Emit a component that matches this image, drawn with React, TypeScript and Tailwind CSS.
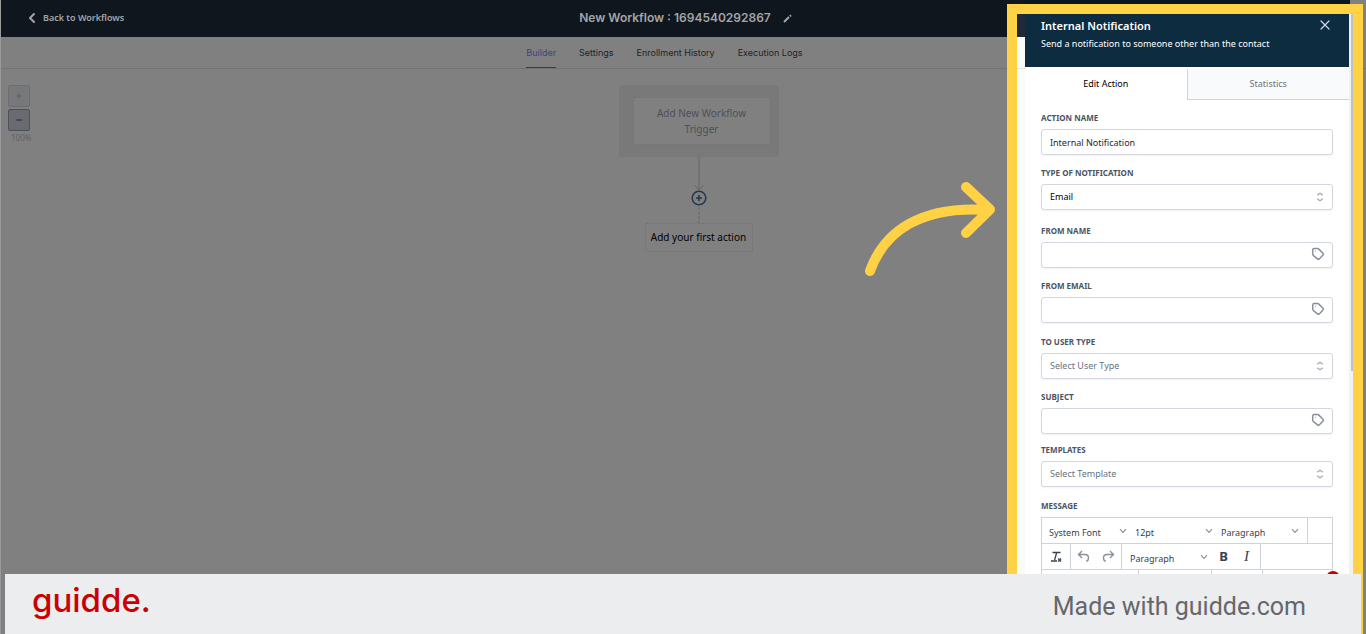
import React, { useState } from 'react';
import { ChevronLeft, Minus, Plus, X } from 'lucide-react';
import { clsx } from 'clsx';

const PAGE_TABS = ['Builder', 'Settings', 'Enrollment History', 'Execution Logs'];
const PANEL_TABS = ['Edit Action', 'Statistics'];

type Field = {
  id: string;
  label: string;
  kind: 'text' | 'tag' | 'select';
  value?: string;
  placeholder?: string;
  gap: string;
};

const FIELDS: Field[] = [
  { id: 'action-name', label: 'Action Name', kind: 'text', value: 'Internal Notification', gap: 'mb-3' },
  { id: 'type', label: 'Type of Notification', kind: 'select', value: 'Email', gap: 'mb-[15px]' },
  { id: 'from-name', label: 'From Name', kind: 'tag', gap: 'mb-3' },
  { id: 'from-email', label: 'From Email', kind: 'tag', gap: 'mb-[13px]' },
  { id: 'user-type', label: 'To User Type', kind: 'select', placeholder: 'Select User Type', gap: 'mb-3' },
  { id: 'subject', label: 'Subject', kind: 'tag', gap: 'mb-[10px]' },
  { id: 'templates', label: 'Templates', kind: 'select', placeholder: 'Select Template', gap: 'mb-[13px]' },
];

const labelClass = 'block h-3 text-[8px] leading-3 font-bold uppercase text-[#4b5563]';
const controlClass =
  'block h-[26px] w-full appearance-none rounded-[3px] border border-[#d3d6df] bg-white px-2 text-[9px] shadow-xs outline-none';

type IconProps = { className?: string };

function TagIcon({ className }: IconProps) {
  return (
    <svg viewBox="0 0 14 14" className={className} fill="none" stroke="currentColor" strokeWidth="1.5" strokeLinejoin="round">
      <path d="M3.300 1.600H6.600c.5 0 .9.2 1.200.5l4.200 4.100c.5.5.5 1.200 0 1.700l-3.800 4c-.5.5-1.200.5-1.700 0L2.200 8.300c-.3-.3-.500-.7-.500-1.200V3.200c0-.9.700-1.600 1.600-1.600Z" />
      <path d="M4.300 4.200h.2" strokeWidth="1" strokeLinecap="round" />
    </svg>
  );
}

function SelectorIcon({ className }: IconProps) {
  return (
    <svg viewBox="0 0 8 10" className={className} fill="none" stroke="currentColor" strokeWidth="1.200">
      <path d="M1.200 3.300 4 1.200l2.800 2.100M1.200 6.700 4 8.800l2.800-2.100" />
    </svg>
  );
}

function CaretIcon({ className }: IconProps) {
  return (
    <svg viewBox="0 0 8 6" className={className} fill="none" stroke="currentColor" strokeWidth="1.200">
      <path d="M1 1.200 4 4.300l3-3.100" />
    </svg>
  );
}

function UndoIcon({ className }: IconProps) {
  return (
    <svg viewBox="0 0 13 13" className={className} fill="none" stroke="currentColor" strokeWidth="1.400">
      <path d="M5 1 1.500 4.500 5 8M1.500 4.500H8c2.200 0 3.500 1.500 3.500 3.400S10.400 11 9.200 11.400" />
    </svg>
  );
}

function FormField({ field }: { field: Field }) {
  return (
    <div className={field.gap}>
      <label htmlFor={field.id} className={clsx(labelClass, 'mb-[5px]')}>
        {field.label}
      </label>
      <div className="relative">
        {field.kind === 'select' ? (
          <>
            <select
              id={field.id}
              className={clsx(controlClass, field.placeholder ? 'text-[#6b7280]' : 'text-black')}
            >
              <option>{field.value ?? field.placeholder}</option>
            </select>
            <SelectorIcon className="pointer-events-none absolute top-2 right-[9px] h-[10px] w-2 text-[#a3a8b2]" />
          </>
        ) : (
          <input
            id={field.id}
            type="text"
            defaultValue={field.value}
            className={clsx(controlClass, 'text-[#1f2937]')}
          />
        )}
        {field.kind === 'tag' && (
          <button type="button" aria-label="Insert custom value" className="absolute top-[5px] right-2 text-[#8b8f9b]">
            <TagIcon className="h-[14px] w-[14px]" />
          </button>
        )}
      </div>
    </div>
  );
}

function ToolbarSelect({ label, value }: { label: string; value: string }) {
  return (
    <div className="relative h-6 w-[86px]">
      <select aria-label={label} className="h-full w-full appearance-none bg-transparent text-[9px] text-[#374151] outline-none">
        <option>{value}</option>
      </select>
      <CaretIcon className="pointer-events-none absolute top-[10px] right-2 h-[6px] w-2 text-[#8b919d]" />
    </div>
  );
}

function MessageEditor() {
  return (
    <div>
      <p className={clsx(labelClass, 'mb-[5px]')}>Message</p>
      <div className="border border-[#cfd2d8] text-[#374151]">
        <div className="flex h-[26px] border-b border-[#cfd2d8]">
          <div className="flex border-r border-[#cfd2d8] pl-[7px]">
            <ToolbarSelect label="Font" value="System Font" />
            <ToolbarSelect label="Size" value="12pt" />
            <ToolbarSelect label="Block" value="Paragraph" />
          </div>
        </div>
        <div className="flex h-[26px] border-b border-[#cfd2d8]">
          <div className="flex w-[29px] items-center justify-center border-r border-[#cfd2d8]">
            <button type="button" aria-label="Clear formatting">
              <svg viewBox="0 0 12 12" className="h-3 w-3" fill="none" stroke="currentColor" strokeWidth="1.300">
                <path d="M2.500 1.500h8M6.700 1.500 4.600 9M1 10h6M8.200 7.500l2.800 3M11 7.500l-2.800 3" />
              </svg>
            </button>
          </div>
          <div className="flex w-[51px] items-center justify-around border-r border-[#cfd2d8] text-[#8b919d]">
            <button type="button" aria-label="Undo">
              <UndoIcon className="h-[13px] w-[13px]" />
            </button>
            <button type="button" aria-label="Redo">
              <UndoIcon className="h-[13px] w-[13px] -scale-x-100" />
            </button>
          </div>
          <div className="flex w-[139px] border-r border-[#cfd2d8] pl-2">
            <ToolbarSelect label="Style" value="Paragraph" />
            <button type="button" className="w-[15px] text-[13px] font-bold">B</button>
            <button type="button" className="ml-2 w-[15px] font-['Liberation_Serif',serif] text-[15px] italic">I</button>
          </div>
        </div>
        <div className="flex h-[26px]">
          <div className="w-[97px] border-r border-[#cfd2d8]" />
          <div className="w-[73px] border-r border-[#cfd2d8]" />
          <div className="w-[51px] border-r border-[#cfd2d8]" />
        </div>
      </div>
    </div>
  );
}

function ActionPanel() {
  const [tab, setTab] = useState('Edit Action');

  return (
    <div className="min-w-0 flex-1 bg-white">
      <div className="flex h-[53px] items-start justify-between bg-[#0d2c3f] px-4 text-white">
        <div>
          <h2 className="mt-1 text-[11px] leading-4 font-semibold">Internal Notification</h2>
          <p className="mt-1 text-[9px] leading-3">Send a notification to someone other than the contact</p>
        </div>
        <button type="button" aria-label="Close" className="mt-[3px] text-[#cdd8ea]">
          <X className="h-4 w-4" strokeWidth={1.8} />
        </button>
      </div>
      <div className="mt-[2px] flex h-[31px]">
        {PANEL_TABS.map((name) => (
          <button
            key={name}
            type="button"
            onClick={() => setTab(name)}
            className={clsx(
              'flex-1 border-b text-[9px]',
              tab === name ? 'border-transparent text-black' : 'border-l border-[#d0d4dc] bg-[#f9fafc] text-[#6b7280]'
            )}
          >
            {name}
          </button>
        ))}
      </div>
      <form className="px-4 pt-3">
        {FIELDS.map((field) => (
          <FormField key={field.id} field={field} />
        ))}
        <MessageEditor />
      </form>
    </div>
  );
}

function Canvas() {
  return (
    <main className="relative flex-1 pt-4 pl-[30px]">
      <div className="absolute top-4 left-[7px] flex w-[22px] flex-col gap-[2px]">
        <button
          type="button"
          aria-label="Zoom in"
          className="flex h-[22px] items-center justify-center rounded-[2px] border border-[#6b6d71] bg-[#77787a] text-[#5d5f63]"
        >
          <Plus className="h-2 w-2" strokeWidth={3} />
        </button>
        <button
          type="button"
          aria-label="Zoom out"
          className="flex h-[22px] items-center justify-center rounded-[2px] border border-[#4c505b] bg-[#696b71] text-[#3c3f46]"
        >
          <Minus className="h-2 w-2" strokeWidth={5} />
        </button>
        <span className="pl-[3px] text-[8px] leading-[10px] text-[#5f6165]">100%</span>
      </div>

      <div className="flex flex-col items-center">
        <div className="rounded-[3px] bg-[#797979] py-3 pr-2 pl-[14px]">
          <button
            type="button"
            className="h-12 w-[138px] rounded-[2px] border border-dotted border-[#6e6e6e] bg-[#808080] px-5 text-[10px] leading-4 text-[#4d5056]"
          >
            Add New Workflow Trigger
          </button>
        </div>
        <svg viewBox="0 0 18 66" className="h-[66px] w-[18px]" fill="none">
          <path d="M9 0v33M4.500 28 9 33l4.500-5" stroke="#65676b" />
          <circle cx="9" cy="41" r="6.800" stroke="#27364a" strokeWidth="1.500" />
          <path d="M9 38v6M6 41h6" stroke="#27364a" strokeWidth="1.600" />
          <path d="M9 50v16" stroke="#65676b" strokeDasharray="3 1.500" />
        </svg>
        <button
          type="button"
          className="h-[29px] w-[108px] rounded-[2px] border border-dotted border-[#717171] text-[10px] whitespace-nowrap text-black"
        >
          Add your first action
        </button>
      </div>
    </main>
  );
}

export default function App() {
  const [tab, setTab] = useState('Builder');

  return (
    <div className="relative flex h-screen flex-col overflow-hidden border-l border-[#9a9a9a] bg-[#808080] font-['Noto_Sans',sans-serif]">
      <header className="relative mr-4 flex h-[37px] shrink-0 items-center justify-center bg-[#0f161e] pb-px pl-5 text-[#a3a5a8]">
        <a href="#workflows" className="absolute left-[23px] flex items-center gap-[3px] text-[9px] font-semibold">
          <ChevronLeft className="h-[18px] w-4" strokeWidth={3} />
          Back to Workflows
        </a>
        <h1 className="font-['Inter',sans-serif] text-[12px] font-semibold">New Workflow : 1694540292867</h1>
        <button type="button" aria-label="Rename workflow" className="ml-3">
          <svg viewBox="0 0 9 9" className="h-[9px] w-[9px]" stroke="currentColor" strokeWidth="2">
            <path d="M1 8 6 3M7 2.200 8 1.200" />
          </svg>
        </button>
      </header>

      <nav className="flex h-8 shrink-0 justify-center gap-[23px] border-b border-[#737373] pr-[38px] font-['Inter',sans-serif]">
        {PAGE_TABS.map((name) => (
          <button
            key={name}
            type="button"
            onClick={() => setTab(name)}
            className={clsx(
              'border-b pt-[2px] text-[9px]',
              tab === name ? 'border-[#203c86] text-[#3c4583]' : 'border-transparent text-[#222326]'
            )}
          >
            {name}
          </button>
        ))}
      </nav>

      <Canvas />

      {/* Pointer arrow */}
      <svg viewBox="0 0 136 100" className="absolute top-[180px] right-[369px] h-[100px] w-[136px]" fill="none">
        <path
          d="M9 91C23 52 59 25 128 30M105 7l24 22.500L105 53"
          stroke="#ffd145"
          strokeWidth="10"
          strokeLinecap="round"
          strokeLinejoin="round"
        />
      </svg>

      {/* Highlighted side panel */}
      <aside className="absolute inset-y-0 right-0 flex w-[359px] flex-col pr-[3px]">
        <div className="h-1 shrink-0 pr-[14px] pl-[18px]">
          <div className="h-full bg-[#071720]" />
        </div>
        <div className="flex min-h-0 flex-1 overflow-hidden border-x-[10px] border-t-[10px] border-[#ffd145]">
          <div className="w-2 bg-[#fafafa]">
            <div className="h-[23px] bg-[#1e2a3a]" />
            <div className="h-8 border-b border-[#e5e5e5]" />
          </div>
          <ActionPanel />
          <div className="w-1 bg-[#f1f1f1] pl-[2px]">
            <div className="h-[357px] bg-[#c1c1c1]" />
          </div>
        </div>
        <span className="absolute top-[571px] right-[26px] h-[14px] w-[14px] rounded-full bg-[#cb0000]" />
      </aside>

      <footer className="absolute right-[5px] bottom-0 left-1 flex h-[60px] items-center justify-between bg-[#ecedef] pr-[55px] pl-[27px]">
        <span className="pb-2 font-['Inter',sans-serif] text-[33px] leading-none font-medium text-[#cb0000]">guidde.</span>
        <span className="pt-1 font-['Roboto',sans-serif] text-[25px] leading-none text-[#66676a]">Made with guidde.com</span>
      </footer>
    </div>
  );
}
